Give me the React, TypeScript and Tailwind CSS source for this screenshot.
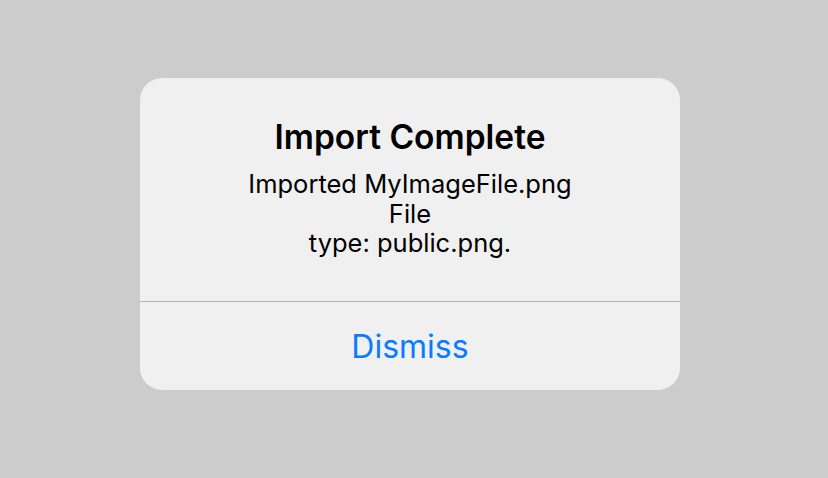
export default function App() {
  return (
    <div
      className="w-[828px] h-[478px] bg-[#cccccc] flex items-start pl-[140px] pt-[78px]"
      style={{ fontFamily: "Inter, 'Noto Sans', sans-serif" }}
    >
      <div className="w-[540px] h-[312px] bg-[#f0f0f0] rounded-[22px] flex flex-col overflow-hidden">
        {/* Message */}
        <div className="h-[223px] flex flex-col items-center pt-[41px] text-black text-center">
          <h2 className="text-[33.5px] leading-[37px] font-semibold">
            Import Complete
          </h2>
          <p className="mt-[13px] text-[25.5px] leading-[29.5px]">
            Imported MyImageFile.png
            <br />
            File
            <br />
            type: public.png.
          </p>
        </div>
        <div className="h-px bg-[#b4b4b4]" />
        {/* Action */}
        <button className="flex-1 flex items-center justify-center text-[32px] text-[#0a7aff] pt-[2px]">
          Dismiss
        </button>
      </div>
    </div>
  );
}
